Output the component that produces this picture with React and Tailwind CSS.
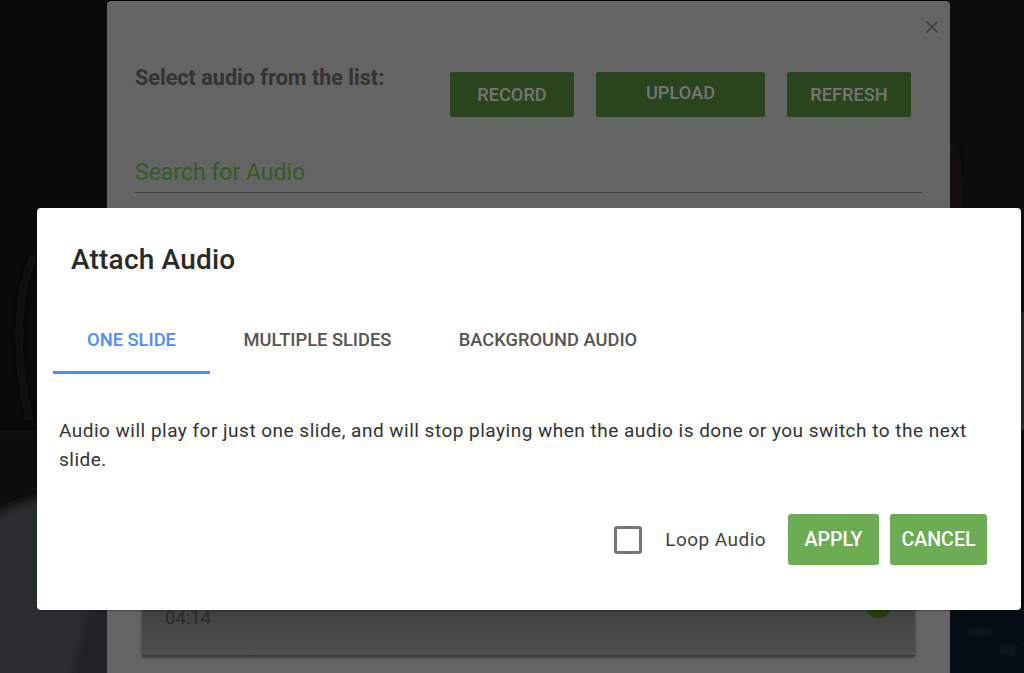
import { X } from "lucide-react";

function LeftPhoto() {
  return (
    <svg className="h-[673px] w-[107px] shrink-0" viewBox="0 0 107 673">
      <defs>
        <filter id="soft-left">
          <feGaussianBlur stdDeviation="5" />
        </filter>
      </defs>
      <rect width="107" height="673" fill="#0a0b09" />
      <g filter="url(#soft-left)">
        <path d="M-10 430 H117 V510 H-10 Z" fill="#110d0b" />
        <path d="M-10 520 C20 500 40 498 117 490 V683 H-10 Z" fill="#2a2d2f" />
        <path d="M117 570 V683 H70 C80 640 90 600 117 570 Z" fill="#222426" />
        <path d="M34 255 C16 295 14 360 30 420" fill="none" stroke="#181816" strokeWidth="4" />
        <path d="M84 615 C92 630 92 650 84 665" fill="none" stroke="#1c1e20" strokeWidth="4" />
      </g>
    </svg>
  );
}

function RightPhoto() {
  return (
    <svg className="h-[673px] w-[74px] shrink-0" viewBox="0 0 74 673">
      <defs>
        <filter id="soft-right">
          <feGaussianBlur stdDeviation="3" />
        </filter>
      </defs>
      <rect width="74" height="673" fill="#0c0e0b" />
      <path d="M0 130 C10 150 16 180 12 208 H0 Z" fill="#120c0a" filter="url(#soft-right)" />
      <rect y="312" width="74" height="118" fill="#262726" />
      <rect y="430" width="74" height="175" fill="#0c0c0c" />
      <rect y="605" width="74" height="68" fill="#070d17" />
      <g fill="#0f171e" filter="url(#soft-right)">
        <ellipse cx="30" cy="632" rx="14" ry="5" />
        <ellipse cx="58" cy="650" rx="10" ry="6" />
      </g>
    </svg>
  );
}

function DimButton({ label, width, raised }) {
  return (
    <button className={`flex h-[45px] items-center justify-center rounded-[2px] bg-[#2a441e] text-[18.2px] font-medium text-[#757575] ${width} ${raised ? "pb-1" : ""}`}>
      {label}
    </button>
  );
}

function Tab({ label, active, width }) {
  return (
    <div className={`flex h-[58px] items-start justify-center border-b-[3px] pt-[13px] text-[18.3px] font-medium leading-[22px] ${width} ${active ? "border-[#4c8dff] text-[#4c8dff]" : "border-transparent text-[#555]"}`}>
      {label}
    </div>
  );
}

function GreenButton({ label, width }) {
  return (
    <button className={`flex h-[51px] items-center justify-center rounded-[3px] bg-[#6cac52] text-[19.6px] font-medium text-white ${width}`}>
      {label}
    </button>
  );
}

export default function App() {
  return (
    <div className="relative flex h-[673px] w-[1024px] overflow-hidden bg-black font-['Roboto',sans-serif]">
      <LeftPhoto />

      {/* panel behind the dialog */}
      <div className="relative mt-px flex h-[672px] w-[843px] shrink-0 flex-col rounded-t bg-[#646464] px-7">
        <button className="absolute top-4 right-2 text-[#3a3a3a]">
          <X size={20} strokeWidth={1.5} />
        </button>
        <div className="mt-[71px] flex items-start justify-between pr-[11px]">
          <h3 className="mt-[-9px] text-[21.6px] font-bold leading-[30px] text-[#333]">
            Select audio from the list:
          </h3>
          <div className="flex gap-[22px]">
            <DimButton label="RECORD" width="w-[124px]" />
            <DimButton label="UPLOAD" width="w-[169px]" raised />
            <DimButton label="REFRESH" width="w-[124px]" />
          </div>
        </div>
        <div className="mt-[41px] border-b border-[#404040] pb-1 text-[23px] leading-[30px] text-[#355c25]">
          Search for Audio
        </div>
        <div className="mx-[7px] mt-6 mb-[16px] flex flex-1 flex-col justify-end rounded-b-[2px] border-b-2 border-[#3c3c3c] bg-[linear-gradient(#3e403d,#3e403d_89%,#4f514d)] shadow-[0_1px_3px_rgba(0,0,0,0.4)]">
          <div className="relative pb-[26px] pl-[23px] text-[18.5px] leading-[22px] text-[#2a2a2a]">
            04:14
            <span className="absolute top-[-16px] right-[23px] h-[27px] w-[27px] rounded-full bg-[#223d10]" />
          </div>
        </div>
      </div>

      <RightPhoto />

      {/* dialog */}
      <div className="absolute top-[208px] left-[37px] h-[402px] w-[984px] rounded bg-white shadow-[0_1px_2px_rgba(0,0,0,0.3)]">
        <h2 className="mt-[34px] ml-[34px] text-[28px] font-medium leading-[36px] tracking-[0.2px] text-[#2a2a2a]">
          Attach Audio
        </h2>
        <div className="mt-[38px] ml-4 flex">
          <Tab label="ONE SLIDE" active width="w-[157px]" />
          <Tab label="MULTIPLE SLIDES" width="w-[215px]" />
          <Tab label="BACKGROUND AUDIO" width="w-[246px]" />
        </div>
        <p className="mt-[42px] ml-[22px] w-[920px] text-[19px] leading-[29px] tracking-[0.49px] text-[#333]">
          Audio will play for just one slide, and will stop playing when the audio is done or you switch to the next slide.
        </p>
        <div className="mt-10 mr-[34px] flex items-center justify-end">
          <span className="h-[28px] w-[28px] rounded-[3px] border-[3px] border-[#757575]" />
          <span className="mr-[22px] ml-[23px] pt-px text-[19px] tracking-[0.45px] text-[#444]">Loop Audio</span>
          <div className="flex gap-[11px]">
            <GreenButton label="APPLY" width="w-[91px]" />
            <GreenButton label="CANCEL" width="w-[97px]" />
          </div>
        </div>
      </div>
    </div>
  );
}
